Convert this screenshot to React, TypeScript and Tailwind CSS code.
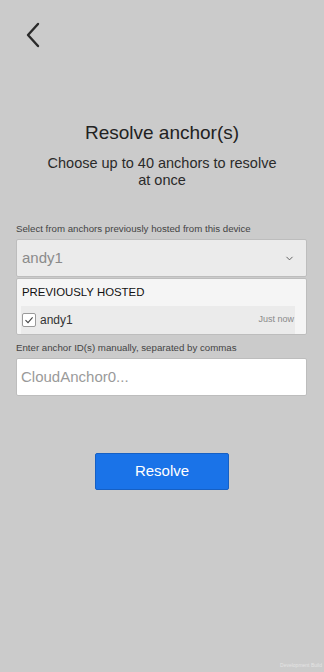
import { ChevronDown } from 'lucide-react';

export default function App() {
  return (
    <div
      className="relative w-[324px] h-[672px] bg-[#cbcbcb] overflow-hidden"
      style={{ fontFamily: '"Liberation Sans", Arial, sans-serif' }}
    >
      {/* Back button */}
      <div className="pt-[22px] pl-[25px] h-[50px]">
        <svg width="16" height="26" viewBox="0 0 16 26" fill="none">
          <path d="M13 2 L3 13 L13 24" stroke="#2a2a2a" strokeWidth="2.4" strokeLinecap="round" strokeLinejoin="round" />
        </svg>
      </div>

      <h1 className="mt-[72px] text-center text-[19px] leading-[22px] text-[#222]">Resolve anchor(s)</h1>
      <p className="mt-[11px] mx-auto w-[236px] text-center text-[14.5px] leading-[17px] text-[#2a2a2a]">
        Choose up to 40 anchors to resolve at once
      </p>

      <div className="mt-[34px] px-[16px]">
        <label className="block text-[9.7px] leading-[12px] text-[#444]">
          Select from anchors previously hosted from this device
        </label>

        {/* Dropdown */}
        <div className="mt-[4px] w-[291px] h-[38px] flex items-center justify-between pl-[5px] pr-[11px] bg-[#ebebeb] border border-[#bdbdbd] rounded-[2px]">
          <span className="text-[15px] text-[#8a8a8a]">andy1</span>
          <ChevronDown className="w-[11px] h-[11px] text-[#555]" strokeWidth={2} />
        </div>

        {/* Dropdown list */}
        <div className="mt-[1px] w-[291px] h-[57px] bg-[#f5f5f5] border border-[#bdbdbd] rounded-[2px] pl-[4px] pr-[11px]">
          <div className="pt-[6px] h-[27px] text-[11.4px] leading-[14px] text-[#111] pl-[1px]">PREVIOUSLY HOSTED</div>
          <div className="h-[28px] flex items-center bg-[#ebebeb] pl-[1px] pr-[1px]">
            <div className="w-[14px] h-[14px] bg-white border border-[#9a9a9a] rounded-[2px] flex items-center justify-center">
              <svg width="10" height="10" viewBox="0 0 10 10" fill="none">
                <path d="M1.5 5.2 L4 7.6 L8.6 2.4" stroke="#444" strokeWidth="1.1" />
              </svg>
            </div>
            <span className="ml-[4px] text-[12px] text-[#333]">andy1</span>
            <span className="ml-auto text-[9px] text-[#8a8a8a]">Just now</span>
          </div>
        </div>

        <label className="mt-[7px] block text-[9.7px] leading-[12px] text-[#444]">
          Enter anchor ID(s) manually, separated by commas
        </label>
        <div className="mt-[4px] w-[291px] h-[38px] flex items-center pl-[4px] bg-white border border-[#bdbdbd] rounded-[2px]">
          <span className="text-[15px] text-[#9a9a9a]">CloudAnchor0...</span>
        </div>
      </div>

      <div className="mt-[57px] flex justify-center">
        <button className="w-[134px] h-[37px] bg-[#1a73e8] border border-[#1660c4] rounded-[2px] text-white text-[15px]">
          Resolve
        </button>
      </div>

      <span className="absolute right-[2px] bottom-[3px] text-[5px] text-[#e4e4e4]">Development Build</span>
    </div>
  );
}
